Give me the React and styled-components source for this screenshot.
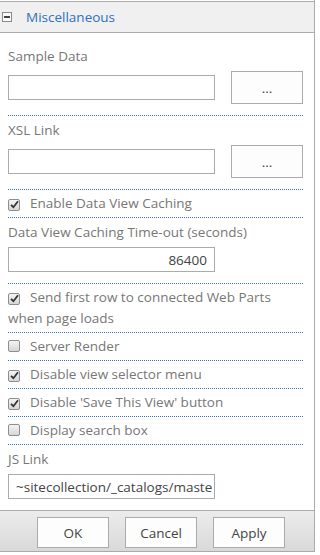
import React from 'react';
import styled, { createGlobalStyle } from 'styled-components';

const Global = createGlobalStyle`
  body {
    margin: 0;
    background: #fff;
    font-family: 'Open Sans', 'Noto Sans', sans-serif;
  }
`;

const Panel = styled.div`
  width: 314px;
  padding-top: 1px;
  border-right: 1px solid #ababab;
  background: #fff;
`;

const Header = styled.div`
  height: 30px;
  display: flex;
  align-items: center;
  border-top: 1px solid #ababab;
  border-bottom: 1px solid #ababab;
  background: #f0f0f0;
`;

const Toggle = styled.span`
  box-sizing: border-box;
  width: 10px;
  height: 10px;
  margin-left: 2px;
  border: 1px solid #8a8a8a;
  background: #fafafa;
  display: flex;
  align-items: center;
  justify-content: center;

  &::after {
    content: '';
    width: 6px;
    height: 2px;
    background: #444;
  }
`;

const Title = styled.span`
  margin-left: 14px;
  color: #2f6fc4;
  font-size: 13.5px;
`;

const Body = styled.div`
  padding: 9px 11px 0 8px;
`;

const Group = styled.div`
  padding: 4px 0 11px;
  border-bottom: ${p => (p.$last ? 'none' : '1px dotted #3d6fc0')};
`;

const Label = styled.div`
  color: #777;
  font-size: 13.5px;
  line-height: 20px;
`;

const FieldRow = styled.div`
  margin-top: 5px;
  display: flex;
  align-items: center;
  justify-content: space-between;
`;

const TextBox = styled.input`
  box-sizing: border-box;
  width: 207px;
  height: 25px;
  margin: 0;
  padding: 0 ${p => (p.$right ? '7px' : '2px')} 0 7px;
  border: 1px solid #ababab;
  background: #fff;
  color: #444;
  font-family: inherit;
  font-size: 13.5px;
  text-align: ${p => (p.$right ? 'right' : 'left')};
  outline: none;
`;

const Button = styled.button`
  box-sizing: border-box;
  width: 72px;
  height: ${p => (p.$tall ? '33px' : '31px')};
  margin: 0;
  padding: 0;
  border: 1px solid #ababab;
  background: #fdfdfd;
  color: #444;
  font-family: inherit;
  font-size: 13.5px;
`;

const CheckRow = styled.div`
  padding: 3px 0;
  border-bottom: 1px dotted #3d6fc0;
  color: #777;
  font-size: 13.5px;
  line-height: 21px;
`;

const Box = styled.span`
  box-sizing: border-box;
  display: inline-flex;
  align-items: center;
  justify-content: center;
  width: 12px;
  height: 12px;
  margin-right: 10px;
  vertical-align: -1px;
  border: 1px solid #8e8e8e;
  border-radius: 2px;
  background: linear-gradient(#f4f4f4, #d6d6d6);
`;

const Footer = styled.div`
  height: 42px;
  display: flex;
  align-items: flex-start;
  gap: 16px;
  padding-left: 37px;
  padding-top: 6px;
  box-sizing: border-box;
  border-top: 1px solid #ababab;
  border-bottom: 1px solid #ababab;
  background: linear-gradient(#ececec, #d9d9d9);
`;

const Check = ({ checked, children }) => (
  <CheckRow>
    <Box>
      {checked && (
        <svg width="9" height="9" viewBox="0 0 9 9">
          <path d="M1 4.8 L3.4 7.2 L8 1.2" fill="none" stroke="#333" strokeWidth="1.8" />
        </svg>
      )}
    </Box>
    {children}
  </CheckRow>
);

export default function App() {
  return (
    <>
      <Global />
      <Panel>
        <Header>
          <Toggle />
          <Title>Miscellaneous</Title>
        </Header>
        <Body>
          <Group>
            <Label>Sample Data</Label>
            <FieldRow>
              <TextBox readOnly />
              <Button $tall>...</Button>
            </FieldRow>
          </Group>
          <Group>
            <Label>XSL Link</Label>
            <FieldRow>
              <TextBox readOnly />
              <Button $tall>...</Button>
            </FieldRow>
          </Group>
          <Check checked>Enable Data View Caching</Check>
          <Group>
            <Label>Data View Caching Time-out (seconds)</Label>
            <FieldRow>
              <TextBox readOnly $right defaultValue="86400" />
            </FieldRow>
          </Group>
          <Check checked>Send first row to connected Web Parts when page loads</Check>
          <Check>Server Render</Check>
          <Check checked>Disable view selector menu</Check>
          <Check checked>Disable 'Save This View' button</Check>
          <Check>Display search box</Check>
          <Group $last>
            <Label>JS Link</Label>
            <FieldRow>
              <TextBox readOnly defaultValue="~sitecollection/_catalogs/masterpage/display templates/jslink.js" />
            </FieldRow>
          </Group>
        </Body>
        <Footer>
          <Button>OK</Button>
          <Button>Cancel</Button>
          <Button>Apply</Button>
        </Footer>
      </Panel>
    </>
  );
}
